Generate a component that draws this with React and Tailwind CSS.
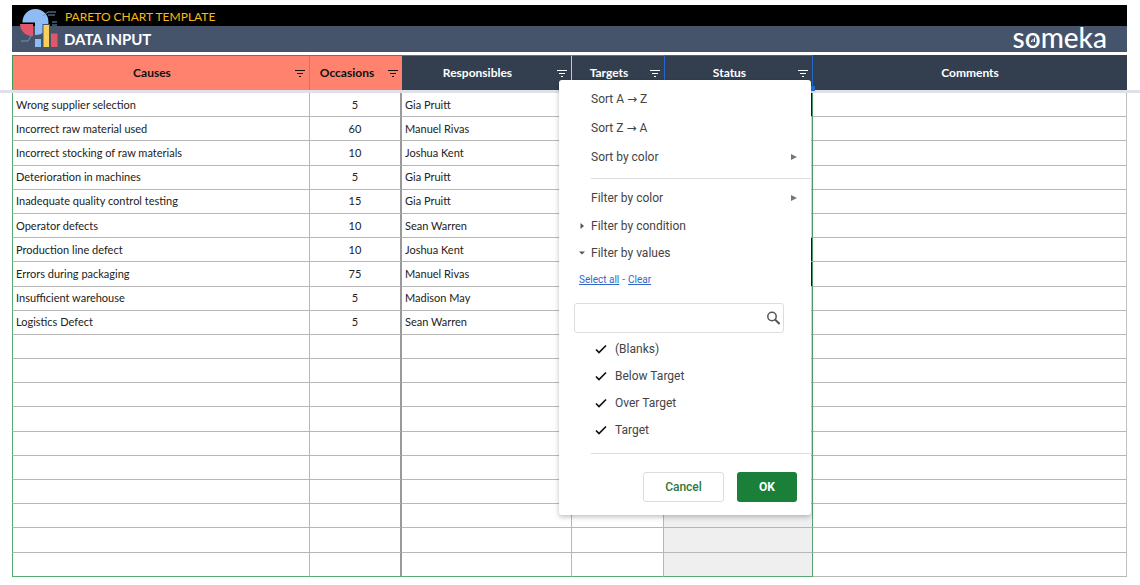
import React, { useState } from 'react';

const columns = [
  { key: 'cause', label: 'Causes', filter: true },
  { key: 'occasions', label: 'Occasions', filter: true },
  { key: 'responsible', label: 'Responsibles', filter: true },
  { key: 'target', label: 'Targets', filter: true },
  { key: 'status', label: 'Status', filter: true },
  { key: 'comment', label: 'Comments', filter: false },
];

const headStyles = {
  cause: 'border-l border-r border-t border-l-[#3f9a5c] border-t-[#3f8a50] border-r-[#b08078] bg-[#ff826e] text-[#111111]',
  occasions: 'border-t border-t-[#3f8a50] bg-[#ff826e] text-[#111111]',
  responsible: 'border-r border-t border-t-[#3f8a50] border-r-[#c4c8ce] bg-[#333f4f] text-white',
  target: 'border-t border-t-[#3f8a50] bg-[#333f4f] text-white',
  status: 'border-x border-t border-[#2468c8] border-t-[#2f6a8c] bg-[#333f4f] text-white',
  comment: 'border-t border-t-[#333f4f] bg-[#333f4f] text-white',
};

const cellStyles = {
  cause: 'border-l border-r border-l-[#57ab70] border-r-[#b7b7b7]',
  occasions: 'border-r-2 border-r-[#999999] text-center',
  responsible: 'border-r border-r-[#b7b7b7]',
  target: 'border-r border-r-[#b7b7b7] text-center',
  status: 'border-r border-r-[#57a070] text-center text-white',
  comment: 'border-r border-r-[#c0c0c0]',
};

const entries = [
  { cause: 'Wrong supplier selection', occasions: 5, responsible: 'Gia Pruitt', over: true },
  { cause: 'Incorrect raw material used', occasions: 60, responsible: 'Manuel Rivas' },
  { cause: 'Incorrect stocking of raw materials', occasions: 10, responsible: 'Joshua Kent' },
  { cause: 'Deterioration in machines', occasions: 5, responsible: 'Gia Pruitt' },
  { cause: 'Inadequate quality control testing', occasions: 15, responsible: 'Gia Pruitt' },
  { cause: 'Operator defects', occasions: 10, responsible: 'Sean Warren' },
  { cause: 'Production line defect', occasions: 10, responsible: 'Joshua Kent', over: true },
  { cause: 'Errors during packaging', occasions: 75, responsible: 'Manuel Rivas', over: true },
  { cause: 'Insufficient warehouse', occasions: 5, responsible: 'Madison May' },
  { cause: 'Logistics Defect', occasions: 5, responsible: 'Sean Warren' },
];

const ROW_COUNT = 20;
const rows = Array.from({ length: ROW_COUNT }, (_, i) => entries[i] ?? {});

const filterValues = ['(Blanks)', 'Below Target', 'Over Target', 'Target'];

const ChartLogo = () => (
  <svg viewBox="0 0 40 42" className="h-[42px] w-10" aria-hidden="true">
    <path d="M2.500 15.500A13 13 0 1 1 15 28V15.500z" fill="#8fbcf5" />
    <path d="M13 17H0A12.500 12 0 0 0 13 29z" fill="#e0566a" />
    <path d="M23 9l5-4h8M28 8h7M32 15h5M32 18h5M1 34h7l3-5" fill="none" stroke="#6f93b4" strokeWidth="1" />
    <rect x="14" y="31" width="8" height="9" fill="#45546a" />
    <rect x="22.500" y="17" width="7.500" height="23" fill="#45546a" />
    <rect x="15" y="32" width="6" height="8" fill="#8fbcf5" />
    <rect x="23.500" y="18" width="5.500" height="22" fill="#fbd05a" />
    <rect x="31" y="26.500" width="6.500" height="13.500" fill="#e0566a" />
  </svg>
);

const FilterIcon = () => (
  <svg viewBox="0 0 12 8" className="h-2 w-3" fill="none" stroke="currentColor" strokeWidth="1" aria-hidden="true">
    <path d="M1 1.500h10M3 4.500h6M5 7.500h2" />
  </svg>
);

const CheckIcon = () => (
  <svg viewBox="0 0 12 10" className="h-[10px] w-3" fill="none" stroke="#111111" strokeWidth="1.700" aria-hidden="true">
    <path d="M1 5.500l3 3L11 1.500" />
  </svg>
);

const SearchIcon = () => (
  <svg viewBox="0 0 14 14" className="h-[14px] w-[14px]" fill="none" stroke="#555555" strokeWidth="1.500" aria-hidden="true">
    <circle cx="6" cy="5.500" r="4.200" />
    <path d="M9 8.500l4.500 4.500" strokeWidth="2" />
  </svg>
);

const Arrow = ({ down = false }) => (
  <svg viewBox="0 0 6 6" className="h-[6px] w-[6px]" fill="#555555" aria-hidden="true">
    <path d={down ? 'M0 1.500h6L3 4.500z' : 'M1.500 0v6L5 3z'} />
  </svg>
);

const MenuItem = ({ children, submenu = false }) => (
  <button type="button" className="flex h-[29px] w-full items-center justify-between pl-8 pr-[14px] text-left">
    {children}
    {submenu && (
      <svg viewBox="0 0 6 6" className="h-[6px] w-[6px]" fill="#777777" aria-hidden="true">
        <path d="M0 0v6L6 3z" />
      </svg>
    )}
  </button>
);

const FilterMenu = () => {
  const [query, setQuery] = useState('');
  const [checked, setChecked] = useState(filterValues);

  const toggle = (value) =>
    setChecked((prev) => (prev.includes(value) ? prev.filter((v) => v !== value) : [...prev, value]));

  return (
    <div className="absolute right-px top-[15px] z-10 w-[252px] rounded-[3px] bg-white pb-[13px] pt-1 text-left font-[Roboto,DejaVu_Sans,sans-serif] text-xs font-normal text-[#444444] shadow-[0_2px_5px_rgba(0,0,0,0.25)]">
      <MenuItem>Sort A → Z</MenuItem>
      <MenuItem>Sort Z → A</MenuItem>
      <MenuItem submenu>Sort by color</MenuItem>
      <hr className="mb-1 ml-8 mt-[7px] border-[#dddddd]" />
      <MenuItem submenu>Filter by color</MenuItem>
      <button type="button" className="flex h-[27px] items-center gap-1.5 pl-5">
        <Arrow />
        Filter by condition
      </button>
      <button type="button" className="flex h-[27px] items-center gap-1.5 pl-5">
        <Arrow down />
        Filter by values
      </button>
      <div className="flex h-[27px] items-center gap-[3px] pl-5 text-[10px] text-[#3367c8]">
        <button type="button" className="underline" onClick={() => setChecked(filterValues)}>Select all</button>
        -
        <button type="button" className="underline" onClick={() => setChecked([])}>Clear</button>
      </div>
      <div className="ml-[15px] mr-[27px] mt-[10px] flex h-[30px] items-center rounded-[3px] border border-[#dddddd] pr-[3px]">
        <input
          type="text"
          aria-label="Search values"
          value={query}
          onChange={(e) => setQuery(e.target.value)}
          className="h-full min-w-0 flex-1 px-2 outline-none"
        />
        <SearchIcon />
      </div>
      <div className="mt-0.5">
        {filterValues.map((value) => (
          <label key={value} className="flex h-[27px] items-center gap-2 pl-9">
            <input
              type="checkbox"
              className="sr-only"
              checked={checked.includes(value)}
              onChange={() => toggle(value)}
            />
            <span className="w-3">{checked.includes(value) && <CheckIcon />}</span>
            {value}
          </label>
        ))}
      </div>
      <hr className="ml-8 mt-[10px] border-[#dddddd]" />
      <div className="mt-[18px] flex justify-end gap-[13px] pr-[14px] font-medium">
        <button type="button" className="h-[30px] w-[81px] rounded-[3px] border border-[#dddddd] text-[#2c7a41]">
          Cancel
        </button>
        <button type="button" className="h-[30px] w-[60px] rounded-[3px] bg-[#1a8039] font-bold text-white">
          OK
        </button>
      </div>
    </div>
  );
};

const Wordmark = () => (
  <span className="pb-1 font-[Lato,sans-serif] text-[28px] font-medium leading-6">
    s
    <span className="relative">
      o
      <svg viewBox="0 0 6 6" className="absolute bottom-[11px] left-[5px] h-[6px] w-[6px]" aria-hidden="true">
        <path d="M1 5V3.500h1V5zM2.500 5V2h1v3zM4 5V.500h1V5z" fill="#ffffff" />
      </svg>
    </span>
    meka
  </span>
);

const Banner = () => (
  <header className="relative ml-3 mr-[13px] mt-[5px]">
    <div className="flex h-[21px] items-center bg-black pl-[53px] pt-0.5 text-xs text-[#f9b916]">
      PARETO CHART TEMPLATE
    </div>
    <div className="flex h-[26px] items-center justify-between bg-[#45546a] pl-[52px] pr-5 text-white">
      <h1 className="text-[15px] font-bold">DATA INPUT</h1>
      <Wordmark />
    </div>
    <div className="absolute left-2 top-0.5">
      <ChartLogo />
    </div>
  </header>
);

const App = () => (
  <main className="flex h-screen min-h-[560px] flex-col bg-white pb-2 font-[Lato,sans-serif] text-[#222222]">
    <Banner />
    <table className="mt-[3px] w-full grow table-fixed border-separate border-spacing-0 text-[11px] leading-4">
      <colgroup>
        <col className="w-3" />
        <col className="w-[298px]" />
        <col className="w-[92px]" />
        <col className="w-[170px]" />
        <col className="w-[92px]" />
        <col className="w-[149px]" />
        <col />
        <col className="w-[13px]" />
      </colgroup>
      <thead>
        <tr className="h-[35px] text-xs">
          <td />
          {columns.map(({ key, label, filter }) => (
            <th key={key} scope="col" className={`p-0 font-bold ${headStyles[key]}`}>
              <div className="relative flex items-center">
                <span className={`flex-1 text-center ${filter ? 'pr-[18px]' : ''}`}>{label}</span>
                {filter && (
                  <button type="button" aria-label={`Filter ${label}`} className="absolute right-[3px]">
                    <FilterIcon />
                  </button>
                )}
                {key === 'status' && (
                  <>
                    <FilterMenu />
                    <span className="absolute -right-[3px] top-[21px] z-10 h-[5px] w-1 bg-[#2468c8]" />
                  </>
                )}
              </div>
            </th>
          ))}
          <td />
        </tr>
        <tr className="h-[3px]">
          <td colSpan={8} className="bg-[#dfe1ea] p-0" />
        </tr>
      </thead>
      <tbody>
        {rows.map((row, i) => (
          <tr key={i}>
            <td className="p-0" />
            {columns.map(({ key }) => (
              <td
                key={key}
                className={`border-b px-[3px] py-0 ${cellStyles[key]} ${
                  i === ROW_COUNT - 1 && key !== 'comment' ? 'border-b-[#57ab70]' : 'border-b-[#b7b7b7]'
                } ${key === 'status' ? (row.over ? 'bg-[#101b3c]' : 'bg-[#efefef]') : ''}`}
              >
                {row[key] ?? '\u00a0'}
              </td>
            ))}
            <td className="p-0" />
          </tr>
        ))}
      </tbody>
    </table>
  </main>
);

export default App;
